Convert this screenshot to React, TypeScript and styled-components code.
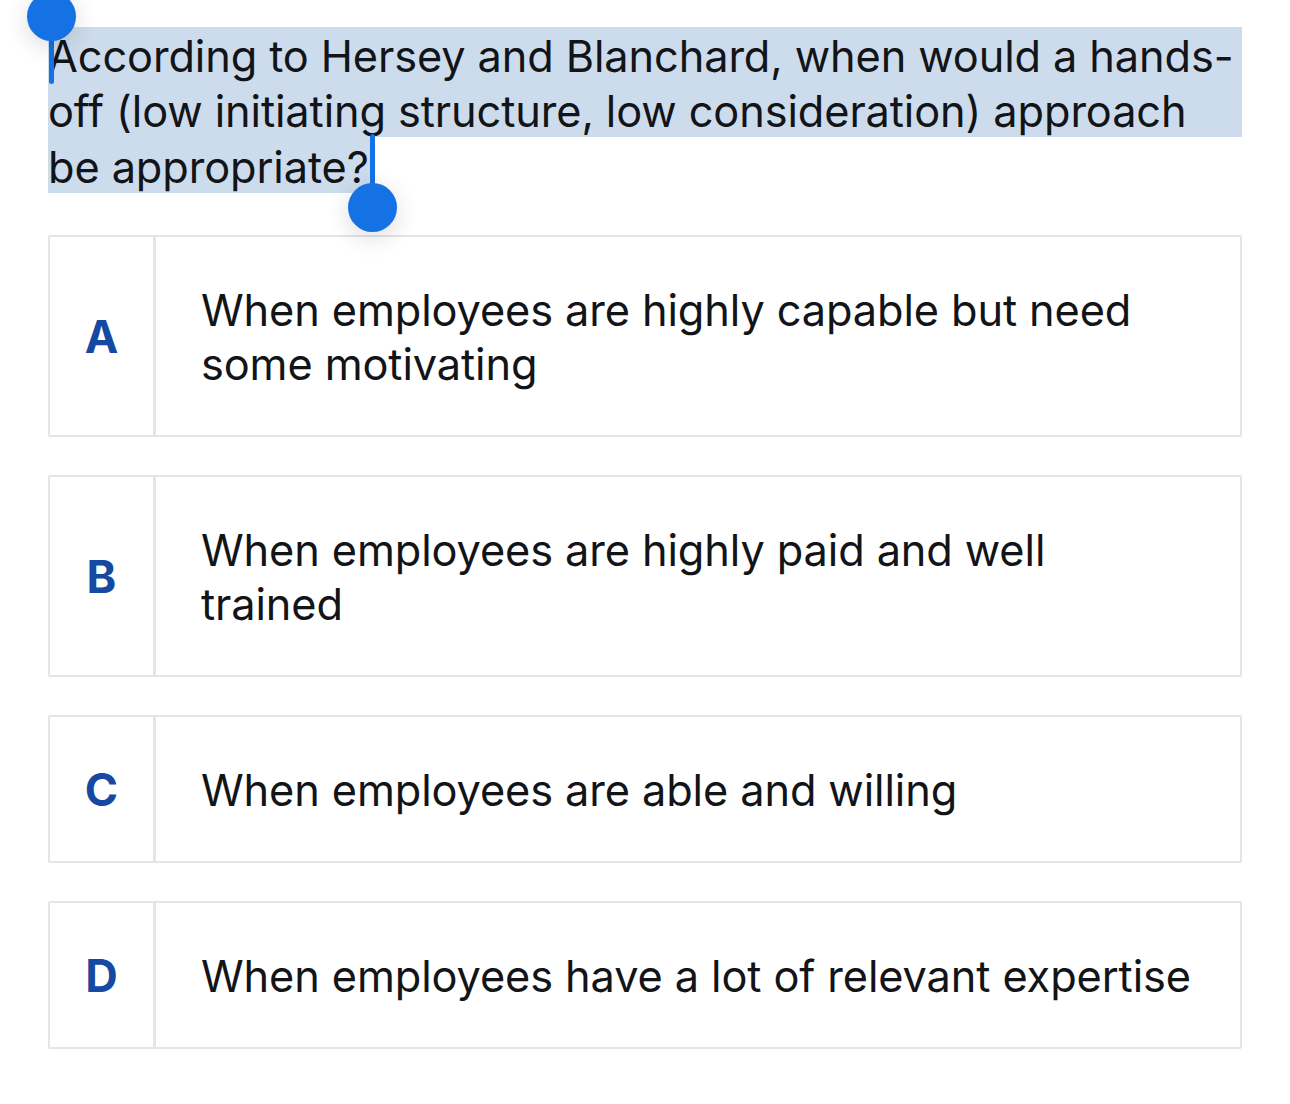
import React from "react";
import styled, { createGlobalStyle } from "styled-components";

interface Choice {
  letter: string;
  text: string;
}

const QUESTION =
  "According to Hersey and Blanchard, when would a hands-\noff (low initiating structure, low consideration) approach\nbe appropriate?";

const CHOICES: Choice[] = [
  { letter: "A", text: "When employees are highly capable but need\nsome motivating" },
  { letter: "B", text: "When employees are highly paid and well\ntrained" },
  { letter: "C", text: "When employees are able and willing" },
  { letter: "D", text: "When employees have a lot of relevant expertise" },
];

const SELECTION = "#cddcec";
const HANDLE = "#1572e4";

const GlobalStyle = createGlobalStyle`
  html, body {
    margin: 0;
    padding: 0;
    background: #ffffff;
  }
  body {
    font-family: Inter, "Noto Sans", "Liberation Sans", sans-serif;
    color: #121418;
    -webkit-font-smoothing: antialiased;
  }
`;

const Page = styled.main`
  width: 1194px;
  padding: 27px 0 40px 48px;
  display: flex;
  flex-direction: column;
`;

const QuestionWrap = styled.div`
  position: relative;
`;

const Question = styled.p`
  margin: 0;
  padding-top: 2px;
  height: 164px;
  font-size: 43.3px;
  line-height: 55.3px;
  letter-spacing: -0.1px;
  white-space: pre;
  /* text selection: two full rows, then up to the end handle */
  background:
    linear-gradient(${SELECTION}, ${SELECTION}) 0 0 / 100% 110px no-repeat,
    linear-gradient(${SELECTION}, ${SELECTION}) 0 110px / 323px 56px no-repeat;
`;

const Handle = styled.span<{ $end?: boolean }>`
  position: absolute;
  width: 5px;
  height: 52px;
  border-radius: 3px;
  background: ${HANDLE};
  left: ${(p) => (p.$end ? "322px" : "1px")};
  top: ${(p) => (p.$end ? "107px" : "5px")};

  &::after {
    content: "";
    position: absolute;
    width: 49px;
    height: 49px;
    border-radius: 50%;
    background: ${HANDLE};
    left: -22px;
    top: ${(p) => (p.$end ? "49px" : "-40px")};
    box-shadow: 0 6px 24px rgba(0, 0, 0, 0.14);
  }
`;

const List = styled.div`
  margin-top: 42px;
  display: flex;
  flex-direction: column;
  gap: 38px;
`;

const Card = styled.div`
  display: flex;
  border: 2px solid #e4e5ea;
  border-radius: 2px;
  background: #fff;
`;

const Letter = styled.div`
  width: 103px;
  flex-shrink: 0;
  display: flex;
  align-items: center;
  justify-content: center;
  border-right: 3px solid #e4e5ea;
  font-size: 45px;
  font-weight: 700;
  color: #1549a2;
`;

const ChoiceText = styled.div`
  flex: 1;
  padding: 46px 30px 44px 45px;
  font-size: 43.3px;
  line-height: 54px;
  letter-spacing: -0.1px;
  white-space: pre;
`;

export default function App() {
  return (
    <>
      <GlobalStyle />
      <Page>
        <QuestionWrap>
          <Question>{QUESTION}</Question>
          <Handle />
          <Handle $end />
        </QuestionWrap>
        <List>
          {CHOICES.map((c) => (
            <Card key={c.letter}>
              <Letter>{c.letter}</Letter>
              <ChoiceText>{c.text}</ChoiceText>
            </Card>
          ))}
        </List>
      </Page>
    </>
  );
}
